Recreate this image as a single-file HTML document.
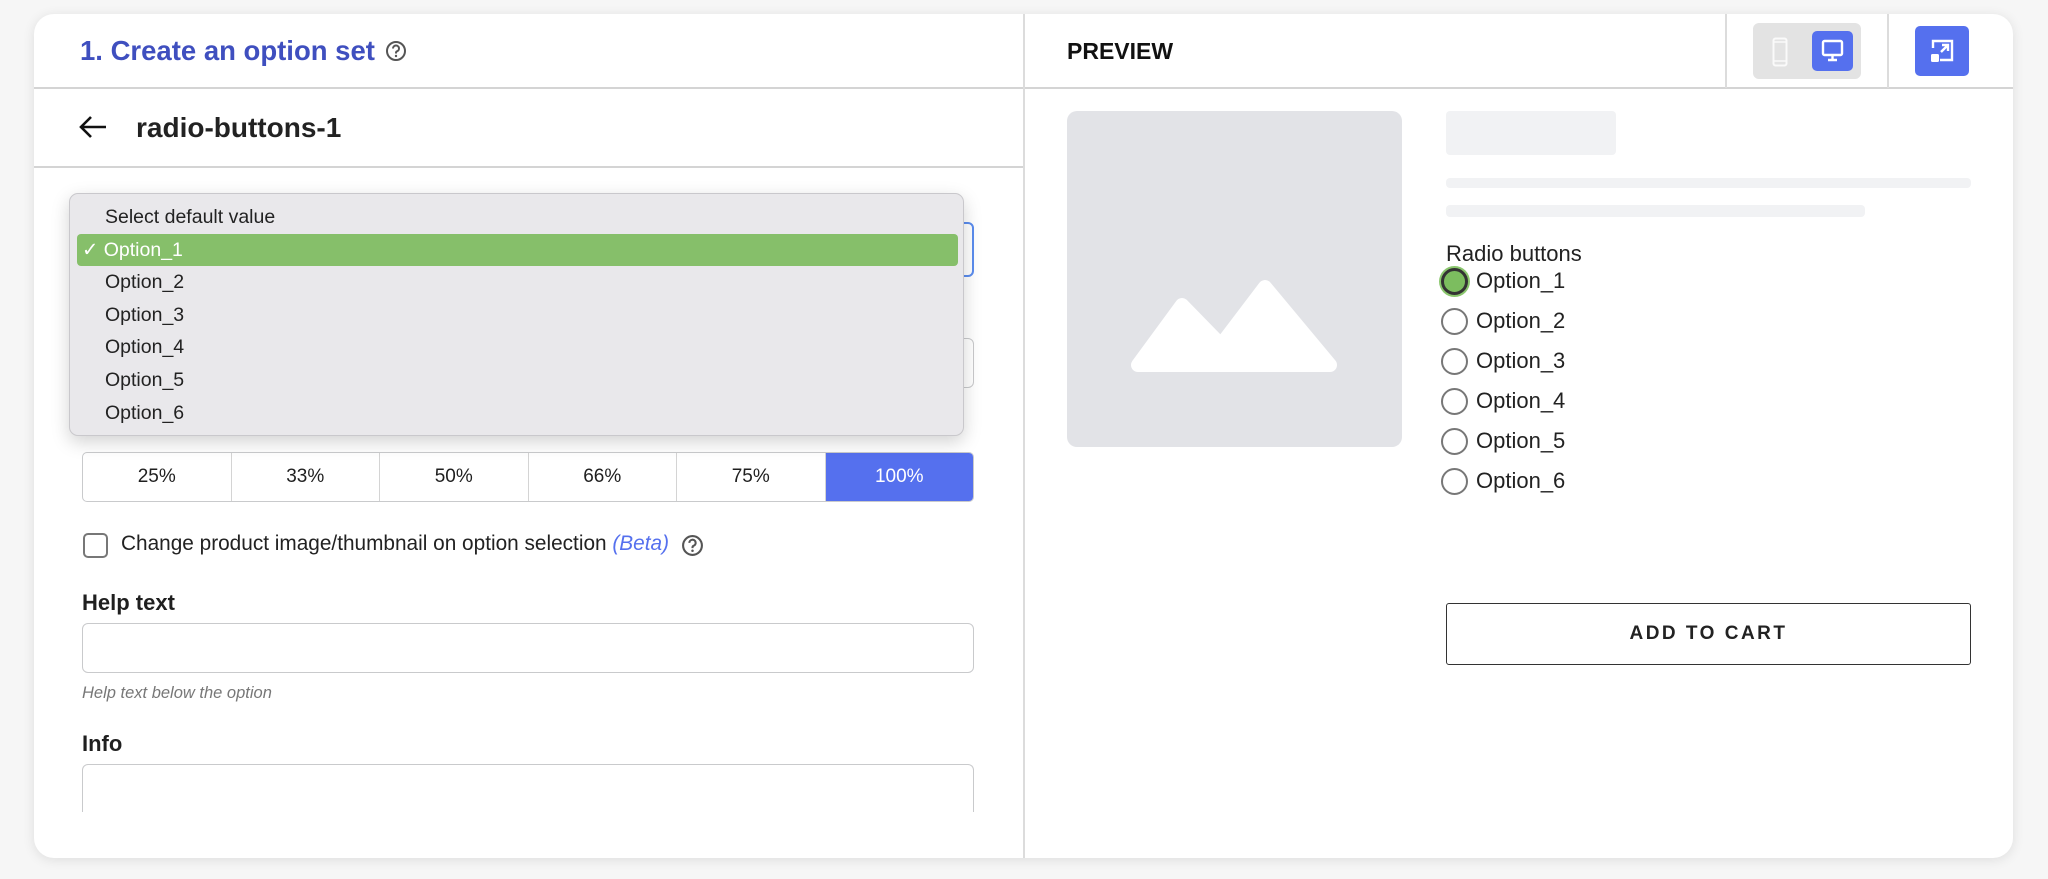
<!DOCTYPE html>
<html><head><meta charset="utf-8"><style>
*{box-sizing:border-box;margin:0;padding:0}
body{width:2048px;height:879px;background:#f6f6f6;font-family:"Liberation Sans",sans-serif;position:relative;overflow:hidden;color:#1f1f1f}
.abs{position:absolute}
.card{left:34px;top:14px;width:1979px;height:844px;background:#fff;border-radius:20px;box-shadow:0 2px 12px rgba(0,0,0,.1);overflow:hidden}
.hl{background:#d4d4d4;height:2px}
.vl{background:#dcdcdc;width:1.5px}
.t{white-space:nowrap}
.inp{border:1.5px solid #c9cacc;border-radius:6px;background:#fff}
.seg{display:flex;left:82px;top:452px;width:892px;height:50px;border:1.5px solid #c9cacc;border-radius:5px;overflow:hidden}
.seg div{flex:1;display:flex;align-items:center;justify-content:center;font-size:19px;border-right:1.5px solid #d4d4d4}
.seg div:last-child{border:none;background:#5570ee;color:#fff}
.dd{left:69px;top:193px;width:895px;height:243px;background:#e9e8eb;border:1px solid #c9c8cc;border-radius:9px;box-shadow:0 6px 18px rgba(0,0,0,.18)}
.di{position:absolute;left:35px;font-size:19.5px;color:#222}
.radio{position:absolute;left:1441px;width:27px;height:27px;border:2px solid #777;border-radius:50%;background:#fff}
.rt{position:absolute;left:1476px;font-size:22px;color:#222}
</style></head><body>
<div class="abs card"></div>
<div class="abs hl" style="left:34px;top:87px;width:1979px"></div>
<div class="abs hl" style="left:34px;top:166px;width:990px"></div>
<div class="abs vl" style="left:1023px;top:14px;height:844px"></div>
<div class="abs vl" style="left:1725px;top:14px;height:74px"></div>
<div class="abs vl" style="left:1887px;top:14px;height:74px"></div>

<div class="abs t" style="left:80px;top:35px;font-size:27.5px;font-weight:700;color:#3f4fbf">1. Create an option set</div>
<svg class="abs" style="left:385px;top:40px" width="22" height="22" viewBox="0 0 22 22"><circle cx="11" cy="11" r="9" fill="none" stroke="#555" stroke-width="2"/><path d="M8 8.5a3 3 0 1 1 4 2.8c-.7.3-1 .8-1 1.6v.6" fill="none" stroke="#555" stroke-width="2"/><circle cx="11" cy="16" r="1.2" fill="#555"/></svg>

<svg class="abs" style="left:78px;top:115px" width="30" height="24" viewBox="0 0 30 24"><path d="M28 12H3M13 2L3 12l10 10" fill="none" stroke="#111" stroke-width="2.6"/></svg>
<div class="abs t" style="left:136px;top:112px;font-size:28px;font-weight:600;color:#222">radio-buttons-1</div>

<div class="abs inp" style="left:82px;top:222px;width:892px;height:55px;border:2.5px solid #5b8def"></div>
<div class="abs inp" style="left:82px;top:338px;width:892px;height:50px"></div>
<div class="abs" style="left:560px;top:310px;width:90px;height:90px;border-radius:50%;background:radial-gradient(#dde1ee,transparent 70%)"></div>

<div class="abs seg"><div>25%</div><div>33%</div><div>50%</div><div>66%</div><div>75%</div><div>100%</div></div>

<div class="abs" style="left:83px;top:533px;width:25px;height:25px;border:2px solid #777;border-radius:5px"></div>
<div class="abs t" style="left:121px;top:532px;font-size:20.8px;color:#222">Change product image/thumbnail on option selection <i style="color:#5570ee">(Beta)</i></div>
<svg class="abs" style="left:681px;top:534px" width="23" height="23" viewBox="0 0 22 22"><circle cx="11" cy="11" r="9" fill="none" stroke="#555" stroke-width="2"/><path d="M8 8.5a3 3 0 1 1 4 2.8c-.7.3-1 .8-1 1.6v.6" fill="none" stroke="#555" stroke-width="2"/><circle cx="11" cy="16" r="1.2" fill="#555"/></svg>

<div class="abs t" style="left:82px;top:590px;font-size:22px;font-weight:600">Help text</div>
<div class="abs inp" style="left:82px;top:623px;width:892px;height:50px"></div>
<div class="abs t" style="left:82px;top:684px;font-size:16.5px;font-style:italic;color:#777">Help text below the option</div>
<div class="abs t" style="left:82px;top:731px;font-size:22px;font-weight:600">Info</div>
<div class="abs inp" style="left:82px;top:764px;width:892px;height:70px;border-bottom:none;border-radius:6px 6px 0 0"></div>
<div class="abs" style="left:60px;top:812px;width:940px;height:46px;background:#fff"></div>

<div class="abs dd">
<div class="abs" style="left:7px;top:40px;width:881px;height:32px;background:#86bf6a;border-radius:4px"></div>
<div class="di" style="top:12px">Select default value</div>
<div class="di" style="top:44px;color:#fff;left:12px">✓ Option_1</div>
<div class="di" style="top:77px">Option_2</div>
<div class="di" style="top:110px">Option_3</div>
<div class="di" style="top:142px">Option_4</div>
<div class="di" style="top:175px">Option_5</div>
<div class="di" style="top:208px">Option_6</div>
</div>

<div class="abs t" style="left:1067px;top:38px;font-size:23px;font-weight:700;color:#111">PREVIEW</div>
<div class="abs" style="left:1753px;top:23px;width:108px;height:56px;background:#e3e3e3;border-radius:6px"></div>
<svg class="abs" style="left:1772px;top:37px" width="16" height="30" viewBox="0 0 16 30"><rect x="1.5" y="1.5" width="13" height="27" rx="2" fill="none" stroke="#fafafa" stroke-width="2"/><path d="M2 5h12M2 24h12" stroke="#fafafa" stroke-width="1.5"/></svg>
<div class="abs" style="left:1812px;top:31px;width:41px;height:40px;background:#5570ee;border-radius:5px"></div>
<svg class="abs" style="left:1820px;top:39px" width="25" height="24" viewBox="0 0 25 24"><rect x="3" y="2" width="19" height="14" rx="1.5" fill="none" stroke="#fff" stroke-width="2.4"/><path d="M12.5 16v5M8 21h9" stroke="#fff" stroke-width="2.4"/></svg>
<div class="abs" style="left:1915px;top:26px;width:54px;height:50px;background:#5570ee;border-radius:5px"></div>
<svg class="abs" style="left:1928px;top:37px" width="28" height="28" viewBox="0 0 28 28"><path d="M5 11V4h19v19h-12" fill="none" stroke="#fff" stroke-width="2.4"/><path d="M13 15l7-7M14 8h6v6" fill="none" stroke="#fff" stroke-width="2.4"/><rect x="3" y="17" width="8" height="8" rx="1.5" fill="#fff"/></svg>

<div class="abs" style="left:1067px;top:111px;width:335px;height:336px;background:#e2e3e7;border-radius:10px"></div>
<svg class="abs" style="left:1128px;top:277px" width="214" height="102" viewBox="-6 -6 214 102"><path d="M4 82L48 22L87 62L131 4L196 82Z" fill="#fff" stroke="#fff" stroke-width="14" stroke-linejoin="round"/></svg>
<div class="abs" style="left:1446px;top:111px;width:170px;height:44px;background:#f1f2f4;border-radius:4px"></div>
<div class="abs" style="left:1446px;top:178px;width:525px;height:10px;background:#f1f2f4;border-radius:4px"></div>
<div class="abs" style="left:1446px;top:205px;width:419px;height:12px;background:#f1f2f4;border-radius:4px"></div>
<div class="abs t" style="left:1446px;top:241px;font-size:22px;color:#222">Radio buttons</div>
<div class="radio" style="top:268px;border:3px solid #333;background:#7cbd5f;box-shadow:0 0 0 2px #8bc76e"></div><div class="rt" style="top:268px">Option_1</div>
<div class="radio" style="top:308px"></div><div class="rt" style="top:308px">Option_2</div>
<div class="radio" style="top:348px"></div><div class="rt" style="top:348px">Option_3</div>
<div class="radio" style="top:388px"></div><div class="rt" style="top:388px">Option_4</div>
<div class="radio" style="top:428px"></div><div class="rt" style="top:428px">Option_5</div>
<div class="radio" style="top:468px"></div><div class="rt" style="top:468px">Option_6</div>
<div class="abs" style="left:1446px;top:603px;width:525px;height:62px;border:1.5px solid #333;border-radius:3px;display:flex;align-items:center;justify-content:center;font-size:19px;font-weight:700;letter-spacing:2.5px;color:#222">ADD TO CART</div>
</body></html>
